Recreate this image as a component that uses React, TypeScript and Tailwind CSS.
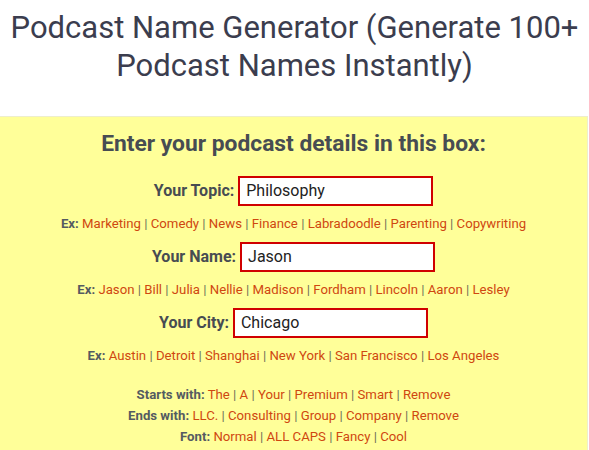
import React from "react";

const font = { fontFamily: "Roboto, 'Noto Sans', Arial, sans-serif" };

function Links({ label, items }: { label: string; items: string[] }) {
  return (
    <div className="text-[13.2px] leading-[16px] text-[#555b61]">
      <span className="font-bold">{label}</span>{" "}
      {items.map((it, i) => (
        <React.Fragment key={it}>
          {i > 0 && <span className="text-[#6b6f5a]"> | </span>}
          <a className="text-[#cf4710] cursor-pointer">{it}</a>
        </React.Fragment>
      ))}
    </div>
  );
}

function Field({ label, value }: { label: string; value: string }) {
  return (
    <div className="flex items-center justify-center gap-[4px]">
      <span className="text-[16px] font-bold text-[#474c52]">{label}</span>
      <div className="w-[195px] h-[30px] border-2 border-[#d00000] bg-white flex items-center px-[6px] text-[16px] text-[#222]">
        {value}
      </div>
    </div>
  );
}

export default function App() {
  return (
    <div style={font} className="w-[589px] h-[450px] bg-white overflow-hidden">
      <h1 className="text-center text-[31px] leading-[38px] font-normal text-[#3b3d4e] pt-[9px]">
        Podcast Name Generator (Generate 100+
        <br />
        Podcast Names Instantly)
      </h1>
      <div className="mt-[31px] bg-[#ffff99] border-t border-[#eeeecc] border-r w-[588px] h-[400px] flex flex-col items-center text-center">
        <h2 className="mt-[13px] text-[22.8px] leading-[28px] font-bold text-[#474c52]">
          Enter your podcast details in this box:
        </h2>
        <div className="mt-[18px] flex flex-col items-center">
          <Field label="Your Topic:" value="Philosophy" />
          <div className="mt-[10px]">
            <Links label="Ex:" items={["Marketing", "Comedy", "News", "Finance", "Labradoodle", "Parenting", "Copywriting"]} />
          </div>
          <div className="mt-[10px]">
            <Field label="Your Name:" value="Jason" />
          </div>
          <div className="mt-[10px]">
            <Links label="Ex:" items={["Jason", "Bill", "Julia", "Nellie", "Madison", "Fordham", "Lincoln", "Aaron", "Lesley"]} />
          </div>
          <div className="mt-[10px]">
            <Field label="Your City:" value="Chicago" />
          </div>
          <div className="mt-[10px]">
            <Links label="Ex:" items={["Austin", "Detroit", "Shanghai", "New York", "San Francisco", "Los Angeles"]} />
          </div>
        </div>
        <div className="mt-[23px] flex flex-col gap-[5px]">
          <Links label="Starts with:" items={["The", "A", "Your", "Premium", "Smart", "Remove"]} />
          <Links label="Ends with:" items={["LLC.", "Consulting", "Group", "Company", "Remove"]} />
          <Links label="Font:" items={["Normal", "ALL CAPS", "Fancy", "Cool"]} />
        </div>
      </div>
    </div>
  );
}
